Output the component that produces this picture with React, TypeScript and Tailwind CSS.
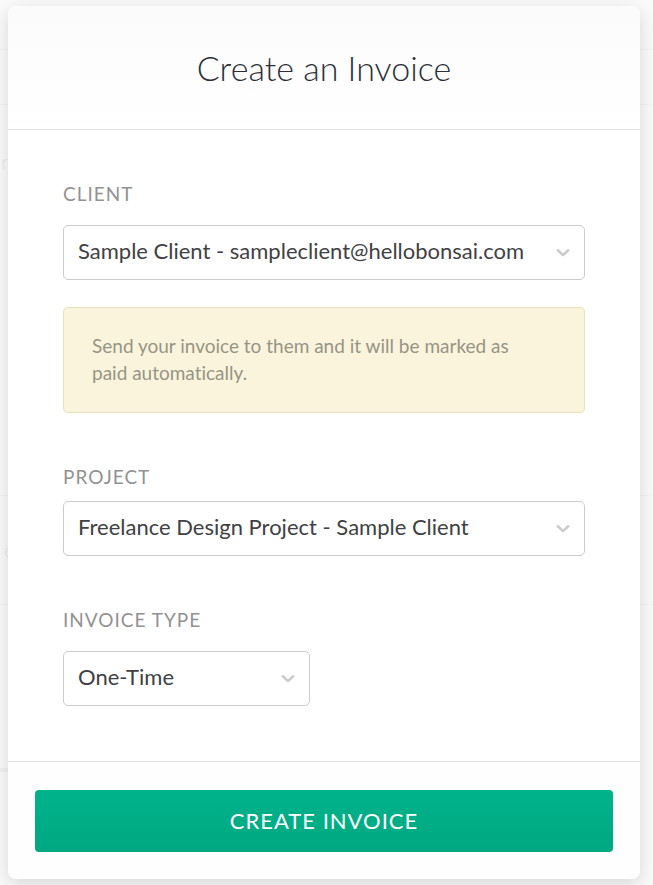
import { useState } from "react";
import type { ReactNode } from "react";

interface SelectFieldProps {
  id: string;
  label: string;
  options: string[];
  labelGap?: string;
  width?: string;
  children?: ReactNode;
}

function SelectField({ id, label, options, labelGap = "pb-5", width = "w-full", children }: SelectFieldProps) {
  const [value, setValue] = useState(options[0]);

  return (
    <div className="flex flex-col">
      <label htmlFor={id} className={`text-[19px] leading-[23px] tracking-[1px] text-[#929292] uppercase ${labelGap}`}>
        {label}
      </label>
      {/* Select and chevron share one grid cell so the native arrow can stay hidden. */}
      <div className={`grid items-center ${width}`}>
        <select
          id={id}
          value={value}
          onChange={(e) => setValue(e.target.value)}
          className="col-start-1 row-start-1 h-[55px] w-full cursor-pointer appearance-none rounded-[5px] border
                     border-[#cccccc] bg-white pr-11 pb-1 pl-[14px] text-[22px] text-[#414144]"
        >
          {options.map((option) => (
            <option key={option}>{option}</option>
          ))}
        </select>
        <svg
          viewBox="0 0 14 9"
          className="pointer-events-none col-start-1 row-start-1 mr-[15px] h-[9px] w-[14px] justify-self-end"
          fill="none"
          stroke="#cccccc"
          strokeWidth="2.6"
          aria-hidden="true"
        >
          <path d="M1.8 2.3 7 7.1l5.2-4.8" strokeLinecap="round" strokeLinejoin="round" />
        </svg>
      </div>
      {children}
    </div>
  );
}

// Faded page that peeks out around the edges of the dialog.
function Backdrop() {
  return (
    <div
      className="absolute inset-0 flex flex-col overflow-hidden pt-[49px] text-[22px] leading-6 text-[#ebebeb]"
      aria-hidden="true"
    >
      <div className="h-14 border-y border-[#f4f4f4]" />
      <span className="pt-[45px] pl-px font-light">r</span>
      <div className="mt-[321px] flex h-[110px] items-center border-y border-[#f4f4f4] pl-1 font-light">e</div>
      <div className="mt-[163px] h-1 w-20 bg-[#f1f1f1]" />
    </div>
  );
}

export default function App() {
  return (
    <main
      className="relative min-h-screen bg-[#fafafa] py-[6px] pr-[13px] pl-2 font-['Lato',sans-serif]
                 [font-variant-ligatures:none]"
    >
      <Backdrop />
      <form
        className="relative rounded-lg bg-white shadow-[0_5px_18px_rgba(0,0,0,0.14)]"
        onSubmit={(e) => e.preventDefault()}
      >
        <header className="rounded-t-lg border-b border-[#e2e2e2] bg-linear-to-b from-[#fbfbfb] to-white px-6 pt-[38px] pb-[37px]">
          <h1 className="text-center text-[34px] leading-[48px] font-light text-[#2c2f38]">Create an Invoice</h1>
        </header>

        <div className="flex flex-col gap-[52px] px-[55px] pt-[52px] pb-[55px]">
          <SelectField id="client" label="Client" options={["Sample Client - sampleclient@hellobonsai.com"]}>
            <p
              className="mt-[27px] rounded-[5px] border border-[#e8e1bd] bg-[#fbf4dc] pt-6 pr-12 pb-[26px] pl-7
                         text-[19px] leading-[27px] text-[#969486]"
            >
              Send your invoice to them and it will be marked as paid automatically.
            </p>
          </SelectField>
          <SelectField
            id="project"
            label="Project"
            labelGap="pb-[13px]"
            options={["Freelance Design Project - Sample Client"]}
          />
          <SelectField id="invoice-type" label="Invoice Type" width="w-[247px]" options={["One-Time", "Recurring"]} />
        </div>

        <footer className="rounded-b-lg border-t border-[#e2e2e2] bg-[#fefefe] px-[27px] pt-7 pb-[27px]">
          <button
            type="submit"
            className="h-[62px] w-full cursor-pointer rounded bg-linear-to-b from-[#00b38b] to-[#00a881] pb-[2px]
                       text-[22px] tracking-[1px] text-white uppercase"
          >
            Create Invoice
          </button>
        </footer>
      </form>
    </main>
  );
}
